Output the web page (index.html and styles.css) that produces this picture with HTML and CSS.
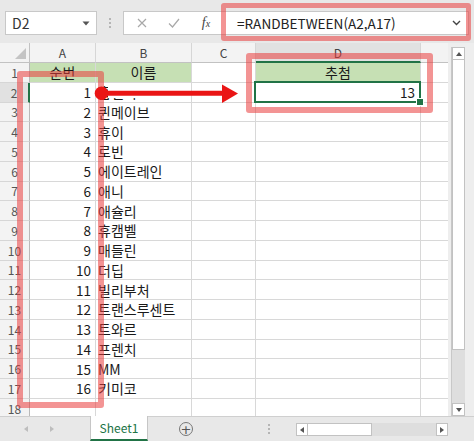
FILE: index.html
```html
<!DOCTYPE html>
<html lang="ko">
<head>
<meta charset="utf-8">
<title>Excel RANDBETWEEN</title>
<link rel="stylesheet" href="styles.css">
</head>
<body>
<div class="toolbar">
  <div class="namebox"><span>D2</span>
    <svg class="dd" width="8" height="5" viewBox="0 0 8 5"><path d="M0.5 0.5 L7.5 0.5 L4 4.5 Z" fill="#555"/></svg>
  </div>
  <div class="grip"><i></i><i></i><i></i></div>
  <div class="fbar">
    <span class="ficon"><svg width="10" height="10" viewBox="0 0 10 10"><path d="M1 1 L9 9 M9 1 L1 9" stroke="#a8a8a8" stroke-width="1.2" fill="none"/></svg></span>
    <span class="ficon"><svg width="12" height="10" viewBox="0 0 12 10"><path d="M1 5.5 L4.5 9 L11 1" stroke="#a8a8a8" stroke-width="1.2" fill="none"/></svg></span>
    <span class="ficon fx"><i>f</i><small>x</small></span>
    <span class="formula">=RANDBETWEEN(A2,A17)</span>
    <svg class="chev" width="9" height="6" viewBox="0 0 9 6"><path d="M1 1 L4.5 4.5 L8 1" stroke="#444" stroke-width="1.4" fill="none"/></svg>
  </div>
</div>

<div class="main">
  <div class="sheet">
    <div class="grid">
      <div class="corner"><span class="tri"></span></div>
      <div class="ch">A</div><div class="ch">B</div><div class="ch">C</div><div class="ch csel">D</div><div class="ch"></div>

      <div class="rh">1</div><div class="c g ctr">순번</div><div class="c g ctr">이름</div><div class="c"></div><div class="c g ctr">추첨</div><div class="c"></div>
      <div class="rh rsel">2</div><div class="c num">1</div><div class="c">홈랜더</div><div class="c"></div><div class="c num sel">13</div><div class="c"></div>
      <div class="rh">3</div><div class="c num">2</div><div class="c">퀸메이브</div><div class="c"></div><div class="c"></div><div class="c"></div>
      <div class="rh">4</div><div class="c num">3</div><div class="c">휴이</div><div class="c"></div><div class="c"></div><div class="c"></div>
      <div class="rh">5</div><div class="c num">4</div><div class="c">로빈</div><div class="c"></div><div class="c"></div><div class="c"></div>
      <div class="rh">6</div><div class="c num">5</div><div class="c">에이트레인</div><div class="c"></div><div class="c"></div><div class="c"></div>
      <div class="rh">7</div><div class="c num">6</div><div class="c">애니</div><div class="c"></div><div class="c"></div><div class="c"></div>
      <div class="rh">8</div><div class="c num">7</div><div class="c">애슐리</div><div class="c"></div><div class="c"></div><div class="c"></div>
      <div class="rh">9</div><div class="c num">8</div><div class="c">휴캠벨</div><div class="c"></div><div class="c"></div><div class="c"></div>
      <div class="rh">10</div><div class="c num">9</div><div class="c">매들린</div><div class="c"></div><div class="c"></div><div class="c"></div>
      <div class="rh">11</div><div class="c num">10</div><div class="c">더딥</div><div class="c"></div><div class="c"></div><div class="c"></div>
      <div class="rh">12</div><div class="c num">11</div><div class="c">빌리부처</div><div class="c"></div><div class="c"></div><div class="c"></div>
      <div class="rh">13</div><div class="c num">12</div><div class="c">트랜스루센트</div><div class="c"></div><div class="c"></div><div class="c"></div>
      <div class="rh">14</div><div class="c num">13</div><div class="c">트와르</div><div class="c"></div><div class="c"></div><div class="c"></div>
      <div class="rh">15</div><div class="c num">14</div><div class="c">프렌치</div><div class="c"></div><div class="c"></div><div class="c"></div>
      <div class="rh">16</div><div class="c num">15</div><div class="c">MM</div><div class="c"></div><div class="c"></div><div class="c"></div>
      <div class="rh">17</div><div class="c num">16</div><div class="c">키미코</div><div class="c"></div><div class="c"></div><div class="c"></div>
      <div class="rh">18</div><div class="c"></div><div class="c"></div><div class="c"></div><div class="c"></div><div class="c"></div>
    </div>
  </div>
  <div class="vside">
    <div class="vs">
      <div class="sbtn"><span class="up"></span></div>
      <div class="thumb"></div>
      <div class="track"></div>
      <div class="sbtn"><span class="down"></span></div>
    </div>
  </div>
</div>

<div class="tabbar">
  <div class="nav"><span class="left"></span><span class="right"></span></div>
  <div class="tab">Sheet1</div>
  <div class="add"><span>+</span></div>
  <div class="hgrip"><i></i><i></i><i></i></div>
  <div class="hs">
    <div class="sbtn h"><span class="left dark"></span></div>
    <div class="hthumb"></div>
    <div class="htrack"></div>
    <div class="sbtn h"><span class="right dark"></span></div>
  </div>
</div>

<div class="hl hl-formula"></div>
<div class="hl hl-result"></div>
<div class="hl hl-col"></div>
<svg class="arrow" width="474" height="441" viewBox="0 0 474 441">
  <rect x="108" y="85" width="40" height="13" fill="#fff"/>
  <line x1="101" y1="93.3" x2="224" y2="93.3" stroke="#ea1515" stroke-width="5"/>
  <circle cx="101.5" cy="93.3" r="6.8" fill="#ea1515"/>
  <path d="M222 84.5 L238 93.5 L222 103 Z" fill="#ea1515"/>
</svg>
</body>
</html>
```

FILE: styles.css
```css
* { box-sizing: border-box; }
body {
  margin: 0;
  width: 474px;
  height: 441px;
  overflow: hidden;
  position: relative;
  background: #e8e8e8;
  font-family: "Noto Sans CJK KR", "Noto Sans", sans-serif;
  color: #1a1a1a;
}

/* toolbar */
.toolbar {
  height: 43px;
  display: flex;
  align-items: flex-start;
  padding-top: 11px;
}
.namebox {
  margin-left: 5px;
  width: 92px;
  height: 24px;
  background: #fff;
  border: 1px solid #c8c8c8;
  display: flex;
  align-items: center;
  justify-content: space-between;
  padding: 0 6px 0 6px;
  font-size: 14px;
  color: #333;
}
.grip {
  width: 26px;
  height: 24px;
  display: flex;
  flex-direction: column;
  align-items: center;
  justify-content: center;
  gap: 2px;
}
.grip i, .hgrip i {
  display: block;
  width: 2px;
  height: 2px;
  background: #b5b5b5;
}
.fbar {
  width: 346px;
  height: 24px;
  background: #fff;
  border: 1px solid #c8c8c8;
  display: flex;
  align-items: center;
  padding-left: 2px;
  position: relative;
}
.ficon {
  width: 32px;
  display: flex;
  justify-content: center;
  align-items: center;
}
.fx {
  font-family: "Liberation Serif", serif;
  font-style: italic;
  color: #444;
  font-size: 14px;
  align-items: baseline;
}
.fx i { font-style: italic; }
.fx small { font-size: 10px; }
.formula {
  margin-left: 15px;
  font-size: 13.6px;
  color: #222;
}
.chev {
  position: absolute;
  right: 7px;
  top: 8px;
}

/* sheet */
.main {
  display: flex;
  height: 373px;
}
.sheet {
  width: 448px;
  overflow: hidden;
  background: #fff;
}
.grid {
  display: grid;
  grid-template-columns: 30px 66px 96px 64px 165px 64px;
  grid-template-rows: 20px;
  grid-auto-rows: 19.75px;
  width: max-content;
}
.corner {
  background: #f3f3f3;
  border-right: 1px solid #c2c2c2;
  border-bottom: 1px solid #c2c2c2;
  position: relative;
}
.tri {
  position: absolute;
  right: 3px;
  bottom: 3px;
  width: 0;
  height: 0;
  border-left: 11px solid transparent;
  border-bottom: 11px solid #c4c4c4;
}
.ch {
  background: #f3f3f3;
  border-right: 1px solid #d6d6d6;
  border-bottom: 1px solid #c2c2c2;
  font-size: 12px;
  color: #444;
  display: flex;
  align-items: center;
  justify-content: center;
}
.ch.csel {
  background: #e1e1e1;
  border-bottom: 2px solid #217346;
}
.rh {
  background: #f3f3f3;
  border-right: 1px solid #b9b9b9;
  border-bottom: 1px solid #d6d6d6;
  font-size: 12px;
  color: #555;
  display: flex;
  align-items: center;
  justify-content: center;
}
.rh.rsel {
  background: #e1e1e1;
  border-right: 2px solid #217346;
}
.c {
  border-right: 1px solid #d8d8d8;
  border-bottom: 1px solid #d8d8d8;
  font-size: 14px;
  display: flex;
  align-items: center;
  padding: 0 2px;
  white-space: nowrap;
}
.c.num { justify-content: flex-end; padding-right: 4px; font-size: 13.5px; }
.c.ctr { justify-content: center; }
.c.g { background: #c6e0b4; }
.c.sel { position: relative; z-index: 2; padding-right: 5px; }
.c.sel::after {
  content: "";
  position: absolute;
  left: -2px;
  top: -2px;
  right: -1px;
  bottom: -1px;
  border: 2px solid #217346;
}
.c.sel::before {
  content: "";
  position: absolute;
  right: -4px;
  bottom: -4px;
  width: 6px;
  height: 6px;
  background: #217346;
  border: 1px solid #fff;
  z-index: 3;
}

/* vertical scrollbar */
.vside {
  width: 26px;
  background: #eeeeee;
  padding: 4px 0 0 3px;
}
.vs {
  width: 14px;
  height: 369px;
  display: flex;
  flex-direction: column;
  background: #dedede;
  border-left: 1px solid #c8c8c8;
}
.sbtn {
  height: 13px;
  background: #fff;
  border: 1px solid #c2c2c2;
  display: flex;
  align-items: center;
  justify-content: center;
}
.thumb {
  height: 290px;
  background: #fff;
  border: 1px solid #c2c2c2;
  border-top: none;
}
.track { flex: 1; }
.up, .down, .left, .right {
  display: block;
  width: 0;
  height: 0;
}
.up { border-left: 3px solid transparent; border-right: 3px solid transparent; border-bottom: 4px solid #555; }
.down { border-left: 3px solid transparent; border-right: 3px solid transparent; border-top: 4px solid #555; }
.left { border-top: 3.5px solid transparent; border-bottom: 3.5px solid transparent; border-right: 4px solid #bdbdbd; }
.right { border-top: 3.5px solid transparent; border-bottom: 3.5px solid transparent; border-left: 4px solid #bdbdbd; }
.left.dark { border-right-color: #555; }
.right.dark { border-left-color: #555; }

/* tab bar */
.tabbar {
  height: 25px;
  display: flex;
  align-items: stretch;
  background: #e8e8e8;
  border-top: 1px solid #cfcfcf;
}
.nav {
  width: 90px;
  display: flex;
  align-items: center;
  gap: 22px;
  padding-left: 24px;
}
.tab {
  width: 58px;
  background: #fff;
  border-left: 1px solid #c6c6c6;
  border-right: 1px solid #c6c6c6;
  border-bottom: 2px solid #217346;
  margin-top: -1px;
  color: #217346;
  font-size: 12px;
  display: flex;
  align-items: center;
  justify-content: center;
}
.add {
  width: 94px;
  display: flex;
  align-items: center;
  padding-left: 31px;
}
.add span {
  width: 14px;
  height: 14px;
  border: 1px solid #777;
  border-radius: 50%;
  display: flex;
  align-items: center;
  justify-content: center;
  font-size: 13px;
  line-height: 1;
  color: #555;
  font-family: "DejaVu Sans", sans-serif;
}
.hgrip {
  width: 54px;
  display: flex;
  flex-direction: column;
  justify-content: center;
  align-items: center;
  gap: 2px;
}
.hs {
  margin-top: 6px;
  height: 13px;
  width: 152px;
  display: flex;
  background: #dedede;
}
.sbtn.h { width: 12px; height: 13px; }
.hthumb {
  width: 64px;
  background: #fff;
  border: 1px solid #c2c2c2;
  border-left: none;
}
.htrack { flex: 1; }

/* annotation overlays */
.hl {
  position: absolute;
  border-style: solid;
  border-color: rgba(234, 60, 60, 0.55);
  border-radius: 3px;
  pointer-events: none;
}
.hl-formula { left: 221px; top: 3px; width: 250px; height: 38px; border-width: 5px; }
.hl-result { left: 246px; top: 53px; width: 187px; height: 60px; border-width: 6.5px; }
.hl-col { left: 17px; top: 71px; width: 87px; height: 337px; border-width: 6.5px; }
.arrow {
  position: absolute;
  left: 0;
  top: 0;
  pointer-events: none;
}
```
